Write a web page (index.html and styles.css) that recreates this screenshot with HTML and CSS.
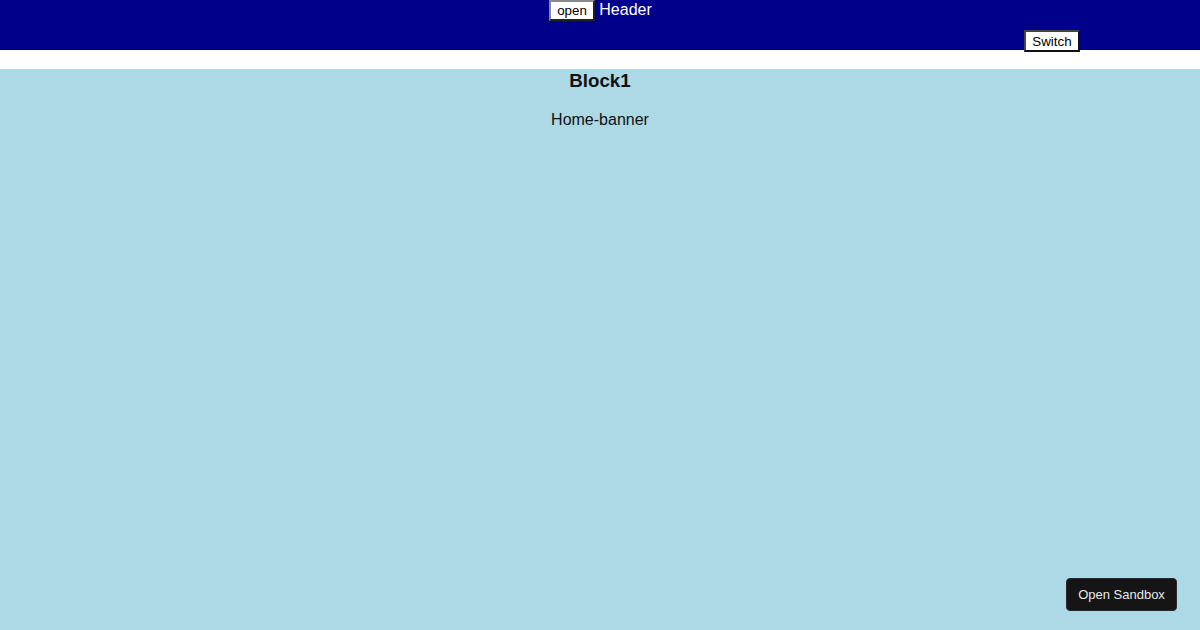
FILE: index.html
```html
<!DOCTYPE html>
<html>
<head>
<meta charset="utf-8">
<link rel="stylesheet" href="styles.css">
</head>
<body>
<header class="header">
  <button class="btn">open</button> Header
  <button class="btn switch">Switch</button>
</header>
<section class="block">
  <h3 class="block-title">Block1</h3>
  <p class="block-text">Home-banner</p>
</section>
<button class="sandbox">Open Sandbox</button>
</body>
</html>
```
FILE: styles.css
```css
html, body {
  margin: 0;
  padding: 0;
  background: #ffffff;
  font-family: "Liberation Sans", Arial, sans-serif;
}
.header {
  position: relative;
  height: 50px;
  background: #00008b;
  color: #ffffff;
  text-align: center;
  font-size: 16px;
  line-height: 20px;
}
.btn {
  font-family: "Liberation Sans", Arial, sans-serif;
  font-size: 13.33px;
  line-height: 15px;
  color: #000;
  background: #ffffff;
  padding: 1px 6px;
  border-width: 2px;
  border-style: solid;
  border-color: #8a8a8a #222 #222 #8a8a8a;
  vertical-align: top;
  margin: 0 0 0 1px;
}
.switch {
  position: absolute;
  top: 30px;
  right: 120px;
  border-color: #444 #111 #111 #444;
  height: 22px;
  width: 56px;
  padding: 1px 4px;
  margin: 0;
  z-index: 2;
}
.block {
  background: #add8e6;
  text-align: center;
  min-height: calc(100vh - 70px);
  margin-top: 19px;
  padding-top: 1px;
  color: #111;
  overflow: hidden;
}
.block-title {
  font-size: 18.72px;
  font-weight: bold;
  line-height: 22px;
  margin: 0 0 19px;
}
.block-text {
  font-size: 16px;
  line-height: 18px;
  margin: 0;
}
.sandbox {
  position: fixed;
  right: 23px;
  bottom: 19px;
  width: 111px;
  height: 33px;
  background: #151515;
  color: #e8e8e8;
  border: 1px solid #2a2a2a;
  border-radius: 4px;
  font-family: "Liberation Sans", Arial, sans-serif;
  font-size: 13px;
  padding: 0;
}
```
